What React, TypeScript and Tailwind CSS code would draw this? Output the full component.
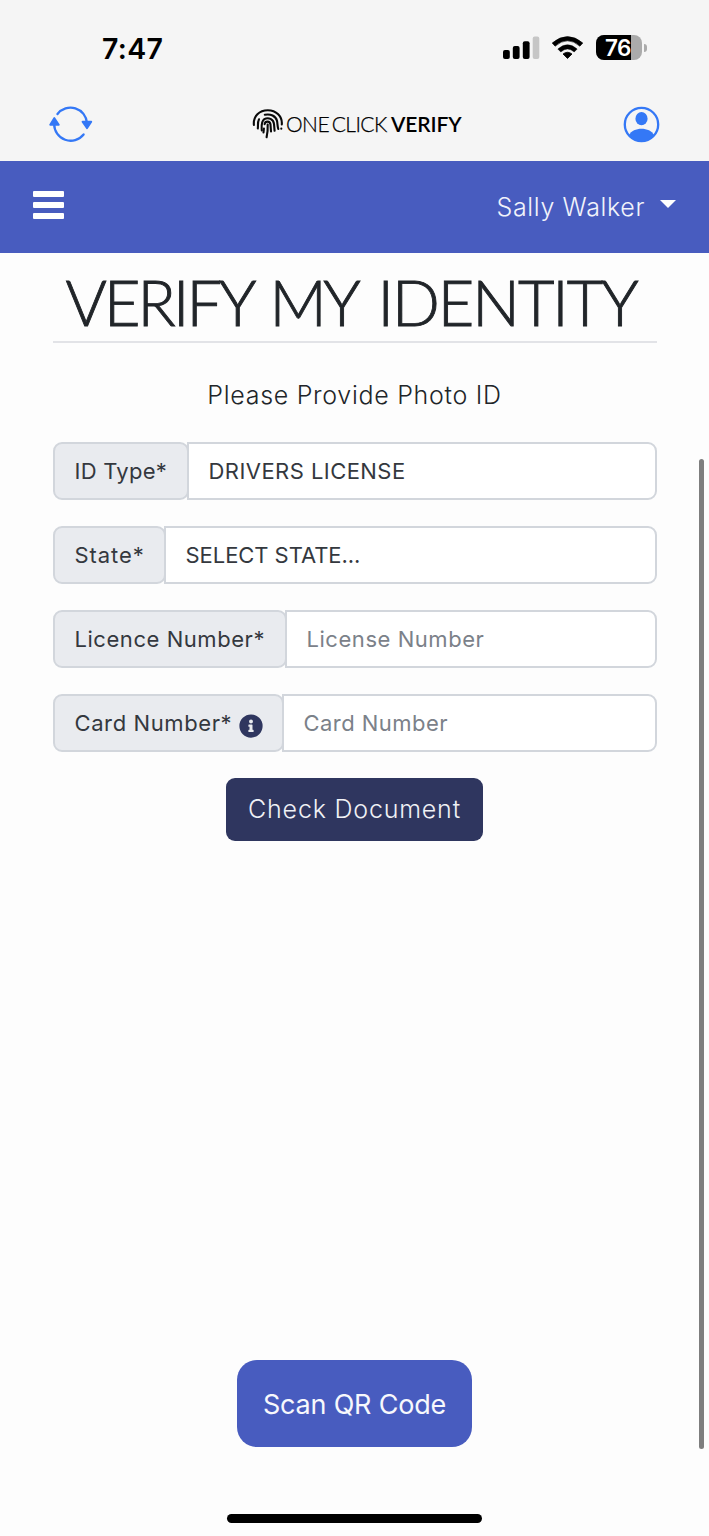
import React from 'react';

const body = "font-['Inter','Liberation_Sans',sans-serif]";

function StatusBar() {
  return (
    <div className="flex h-[88px] w-full items-start">
      <div className="ml-[102px] mt-[34px] h-[30px] w-[80px] whitespace-nowrap font-['Inter',sans-serif] text-[28.500px] font-semibold leading-[30px] tracking-[0.3px] text-black">7:47</div>
      <svg className="ml-[320px] mt-[36px]" width="38" height="24" viewBox="0 0 38 24">
        <rect x="1" y="14" width="6.8" height="9" rx="2" />
        <rect x="10.800" y="10" width="6.8" height="13" rx="2" />
        <rect x="20.800" y="5.2" width="6.8" height="17.8" rx="2" />
        <rect x="30.700" y=".6" width="6.6" height="22.4" rx="2" fill="#c6c6c6" />
      </svg>
      <svg className="ml-[11px] mt-[36px]" width="33" height="24" viewBox="0 0 33 24">
        <path d="M1.2 7Q16.500-5.800 31.800 7L28.900 10.200Q16.500-.6 4.100 10.200Z" stroke="#000" strokeWidth=".6" strokeLinejoin="round" />
        <path d="M6.800 13Q16.500 4.400 26.200 13L23.200 16Q16.500 10 9.800 16Z" stroke="#000" strokeWidth=".4" strokeLinejoin="round" />
        <path d="M12 18Q16.500 14.500 21 18L16.500 22.500Z" stroke="#000" strokeWidth=".8" strokeLinejoin="round" />
      </svg>
      <div className="relative ml-[12px] mt-[35px] flex h-[25px] w-[46px] overflow-hidden rounded-[8px] bg-[#ababab]">
        <div className="h-full w-[35px] bg-black" />
        <span className="absolute left-[9px] top-0 font-['Inter',sans-serif] text-[22.500px] font-semibold leading-[25px] tracking-[-0.6px] text-white">76</span>
      </div>
      <div className="ml-[2px] mt-[44px] h-[8px] w-[2.5px] rounded-r-full bg-[#ababab]" />
    </div>
  );
}

function Fingerprint() {
  return (
    <svg width="32" height="30" viewBox="0 0 32 30" fill="none" stroke="#0a0a0a" strokeWidth="2.1" strokeLinecap="round">
      <path d="M1.9 16C1 7 7.500 1.2 15.8 1.2S30.500 7.500 29.8 15.4" />
      <path d="M5.800 19.500C6.300 16.500 5.300 13.500 7 10.300M12.800 5.800C18.500 4.500 23.800 7 25 11.800 25.600 14.500 25.300 17 26.300 20" />
      <path d="M9.800 21.500C9.600 17 8.800 12.800 12.300 10.200 16.500 7.800 21.500 10.200 22 15L22.600 21.800" />
      <path d="M12.600 15.2C13.200 11.600 18 11.800 18.500 15.500L19 22.500" />
      <path d="M15.700 15.500C15.900 20 15.500 24 14.600 28.200M11.900 19.500 11.500 23.500" />
      <path d="M29.300 19.500v.3" />
    </svg>
  );
}

function AppHeader() {
  return (
    <div className="flex h-[73px] w-full items-start">
      <svg className="ml-[49px] mt-[18px]" width="44" height="37" viewBox="0 0 44 37" fill="none" stroke="#3478f6" strokeWidth="2.3" strokeLinecap="round">
        <path d="M8.500 8A16.500 16.500 0 0 1 38 17" />
        <path d="M34.600 28.500A16.500 16.500 0 0 1 5.200 18" />
        <path d="M33.500 15.700H42.300L38 22.300Z" fill="#3478f6" strokeWidth="1.8" strokeLinejoin="round" />
        <path d="M1.200 18.800H9.800L5.300 12Z" fill="#3478f6" strokeWidth="1.8" strokeLinejoin="round" />
      </svg>
      <div className="ml-[159px] mt-[21px] flex h-[32px] w-[220px] items-start text-black">
        <Fingerprint />
        <div className="ml-[2px] flex whitespace-nowrap font-['Lato',sans-serif] text-[21px] leading-[29px]">
          <span className="w-[105px] font-light tracking-[-0.55px] [word-spacing:-2.5px] [-webkit-text-stroke:0.25px_black]">ONE CLICK</span>
          <span className="font-semibold tracking-[-0.1px]">VERIFY</span>
        </div>
      </div>
      <svg className="ml-[150px] mt-[18px]" width="38" height="38" viewBox="0 0 38 38">
        <circle cx="19.5" cy="18.5" r="16.7" fill="none" stroke="#3478f6" strokeWidth="2.3" />
        <ellipse cx="19.5" cy="12.7" rx="6.1" ry="6.6" fill="#3478f6" />
        <path d="M7 29C11 20.500 28 20.500 32 29Q27 35.500 19.500 35.500T7 29Z" fill="#3478f6" />
      </svg>
    </div>
  );
}

function Field({ label, boxClass, labelClass, value, valueClass, icon }: {
  label: string; boxClass: string; labelClass: string; value: string; valueClass: string; icon?: boolean;
}) {
  return (
    <div className="flex h-[58px] w-[604px]">
      <div className={`relative flex h-full shrink-0 items-center rounded-[9px] border-2 border-[#d2d6dc] bg-[#e9ebef] pl-[20px] ${boxClass}`}>
        <span className={`whitespace-nowrap text-[22px] font-[370] leading-[30px] text-[#34383e] ${labelClass}`}>{label}</span>
        {icon && (
          <svg className="absolute left-[184px] top-[18px]" width="24" height="24" viewBox="0 0 512 512">
            <path fill="#2f365f" d="M256 8a248 248 0 1 0 0 496 248 248 0 0 0 0-496zm0 110a42 42 0 1 1 0 84 42 42 0 0 1 0-84zm56 254a12 12 0 0 1-12 12h-88a12 12 0 0 1-12-12v-24a12 12 0 0 1 12-12h12v-64h-12a12 12 0 0 1-12-12v-24a12 12 0 0 1 12-12h64a12 12 0 0 1 12 12v100h12a12 12 0 0 1 12 12z" />
          </svg>
        )}
      </div>
      <div className="-ml-[2px] flex h-full grow items-center rounded-r-[9px] border-2 border-[#d2d6dc] bg-white pl-[20px]">
        <span className={`whitespace-nowrap text-[22px] font-[370] leading-[30px] ${valueClass}`}>{value}</span>
      </div>
    </div>
  );
}

export default function App() {
  return (
    <div className={`relative flex h-[1536px] w-[709px] flex-col overflow-hidden bg-[#fdfdfd] ${body}`}>
      <header className="flex h-[161px] w-full flex-col bg-[#f5f5f5]">
        <StatusBar />
        <AppHeader />
      </header>
      <nav className="flex h-[92px] w-full items-start bg-[#485cbf]">
        <div className="ml-[33px] mt-[30px] flex w-[31px] flex-col gap-[5px]">
          <div className="h-[6px] rounded-[1px] bg-white" />
          <div className="h-[6px] rounded-[1px] bg-white" />
          <div className="h-[6px] rounded-[1px] bg-white" />
        </div>
        <div className="ml-[432.500px] mt-[29px] w-[163.500px] whitespace-nowrap text-[25px] font-[330] leading-[34px] tracking-[0.65px] text-[#f1f3fb]">Sally Walker</div>
        <div className="mt-[39px] h-0 w-0 border-x-[8px] border-t-[8px] border-x-transparent border-t-white" />
      </nav>
      <main className="flex w-full flex-col items-center">
        <h1 className="mt-[13px] flex h-[75px] w-[604px] whitespace-nowrap pl-[13px] font-['Lato',sans-serif] text-[63px] font-light leading-[72px] text-[#212529] [-webkit-text-stroke:0.9px_#212529]">
          <span className="w-[204px] shrink-0 tracking-[-2.9px]">VERIFY </span>
          <span className="w-[108px] shrink-0 tracking-[-3.5px]">MY </span>
          <span className="shrink-0 tracking-[-2px]">IDENTITY</span>
        </h1>
        <div className="h-[2px] w-[604px] bg-[#e2e3e7]" />
        <p className="mt-[35px] whitespace-nowrap text-[25px] font-[340] leading-[34px] tracking-[0.7px] text-[#212529]">Please Provide Photo ID</p>
        <form className="mt-[30px] flex flex-col gap-[26px]">
          <Field label="ID Type*" boxClass="w-[136px]" labelClass="tracking-[0.25px]" value="DRIVERS LICENSE" valueClass="text-[#34383e] tracking-[0.45px]" />
          <Field label="State*" boxClass="w-[113px]" labelClass="tracking-[0.95px]" value="SELECT STATE..." valueClass="text-[#34383e] tracking-[-0.05px]" />
          <Field label="Licence Number*" boxClass="w-[234px]" labelClass="tracking-[0.55px]" value="License Number" valueClass="text-[#7b8189] tracking-[0.55px]" />
          <Field label="Card Number*" boxClass="w-[231px]" labelClass="tracking-[0.6px]" value="Card Number" valueClass="text-[#7b8189] tracking-[0.45px]" icon />
        </form>
        <button className="mt-[26px] flex h-[63px] w-[257px] items-center justify-center whitespace-nowrap rounded-[9px] bg-[#2f365f] text-[25px] font-[330] tracking-[0.8px] text-[#f0f1f5]">Check Document</button>
        <button className="mt-[519px] flex h-[87px] w-[235px] items-center justify-center whitespace-nowrap rounded-[20px] bg-[#485cbf] pt-[3px] text-[27px] font-normal tracking-[-0.2px] text-[#f7f8fc]">Scan QR Code</button>
        <div className="mt-[67px] h-[9px] w-[255px] rounded-full bg-black" />
      </main>
      <div className="absolute left-[699px] top-[459px] h-[990px] w-[5px] rounded-full bg-[#7e7e7e]" />
    </div>
  );
}
